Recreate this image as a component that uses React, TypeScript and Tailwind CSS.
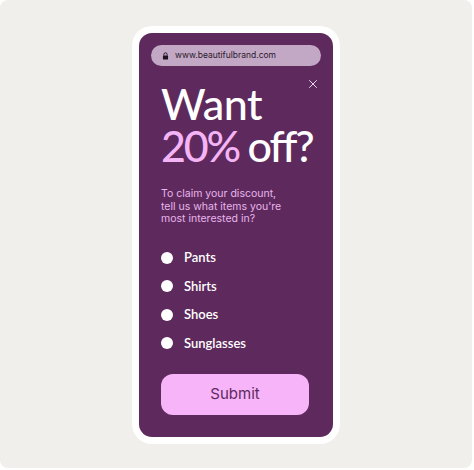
import { X } from 'lucide-react';

const options = ['Pants', 'Shirts', 'Shoes', 'Sunglasses'];

function LockIcon() {
  return (
    <svg viewBox="0 0 8 10" className="h-[8px] w-[7px]">
      <path d="M2 4.5V3a2 2 0 0 1 4 0v1.5" fill="none" stroke="#1e121e" strokeWidth="1.2" />
      <rect x="0.8" y="4.3" width="6.4" height="5.2" rx="0.8" fill="#1e121e" />
    </svg>
  );
}

export default function App() {
  return (
    <div className="h-[470px] w-[474px] bg-white">
      <div className="flex h-[468px] w-[472px] justify-center rounded-lg bg-[#f0efec] pt-[26px]">
        <div className="h-[418px] w-[208px] shrink-0 rounded-[20px] bg-white p-[7px]">
          <div className="relative h-full rounded-[13px] bg-[#5e2a5d] px-3 pt-3">
            {/* url bar */}
            <div className="flex h-[21px] items-center gap-[6px] rounded-full bg-[#c3a8c6] pl-[11px] font-['Inter',sans-serif] text-[8.5px] text-[#2a1a2a]">
              <LockIcon />
              <span>www.beautifulbrand.com</span>
            </div>

            <button type="button" className="absolute right-[13px] top-[44px] text-[#f2e4f2]">
              <X className="h-[14px] w-[14px]" strokeWidth={1.6} />
            </button>

            <div className="pl-[10px]">
              <h1 className="mt-[17px] whitespace-nowrap font-['Lato',sans-serif] text-[43px] font-medium leading-[42px] text-white">
                <span className="tracking-[-0.5px]">Want</span>
                <br />
                <span className="tracking-[-2.2px]">
                  <span className="text-[#f4b4f6]">20%</span> off?
                </span>
              </h1>

              <p className="mt-[21px] font-['Inter',sans-serif] text-[10.5px] leading-[12.5px] text-[#e8b5ec]">
                To claim your discount,
                <br />
                tell us what items you're
                <br />
                most interested in?
              </p>

              <ul className="mt-[24px] flex flex-col gap-[12px]">
                {options.map((o) => (
                  <li key={o} className="flex h-[16.5px] items-center gap-[11px]">
                    <span className="h-[12px] w-[12px] rounded-full bg-white" />
                    <span className="font-['Lato',sans-serif] text-[13px] font-semibold text-white">{o}</span>
                  </li>
                ))}
              </ul>

              <button
                type="button"
                className="mt-[22px] flex h-[41px] w-[148px] items-center justify-center rounded-[12px] bg-[#f7b4f8] font-['Inter',sans-serif] text-[15px] text-[#5e2a5d]"
              >
                Submit
              </button>
            </div>
          </div>
        </div>
      </div>
    </div>
  );
}
